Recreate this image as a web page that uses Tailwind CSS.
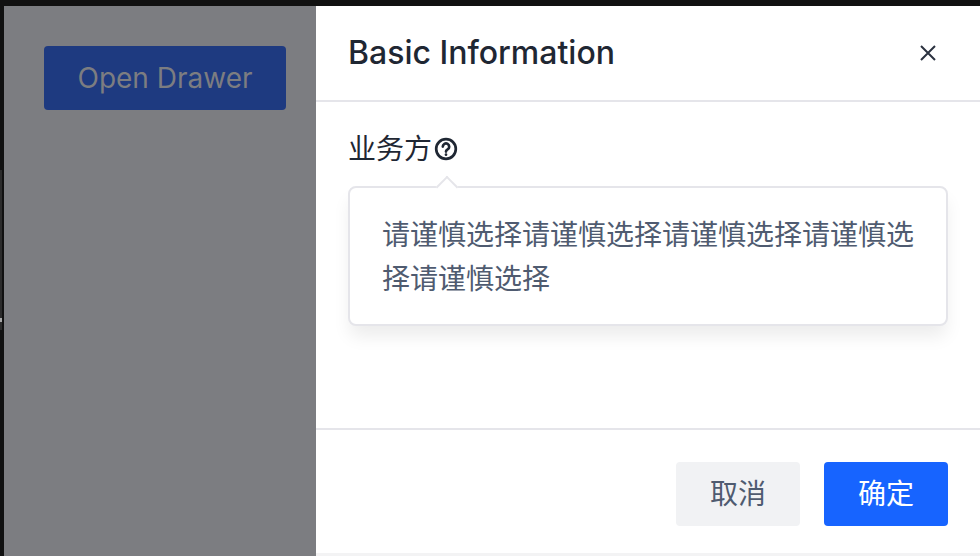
<!DOCTYPE html>
<html lang="en">
	<head>
		<meta charset="UTF-8" />
		<title>Drawer</title>
		<script src="https://cdn.jsdelivr.net/npm/@tailwindcss/browser@4"></script>
	</head>
	<body class="bg-[#111111] overflow-hidden font-['Inter','Noto_Sans_CJK_SC',sans-serif]">
		<div class="h-[556px] w-[980px] pt-[6px] flex">
			<!-- window edge -->
			<div class="w-[4px] h-full pt-[164px] shrink-0">
				<div class="w-[2px] h-[160px] bg-[#2c2c2c] flex flex-col justify-end">
					<div class="h-[4px] mb-[8px] bg-[#a8a8a8]"></div>
				</div>
			</div>
			<!-- page behind the overlay -->
			<div class="w-[312px] h-full bg-[#7c7d81] pt-[40px] pl-[40px]">
				<button class="w-[242px] h-[64px] rounded-[4px] bg-[#1e3a80] text-[#7c7d81] text-[28px] flex items-center justify-center">Open Drawer</button>
			</div>
			<!-- drawer -->
			<div class="w-[664px] h-full bg-white flex flex-col">
				<header class="h-[96px] shrink-0 border-b-2 border-[#e5e5ea] pl-[32px] pr-[40px] flex items-center justify-between">
					<h1 class="text-[32px] font-[450] text-[#1f2733]">Basic Information</h1>
					<svg class="w-[24px] h-[24px]" viewBox="0 0 24 24" fill="none" stroke="#2b3240" stroke-width="2"><path d="M5 5l14 14M19 5L5 19" /></svg>
				</header>
				<main class="flex-1 pt-[27px] pl-[32px] pr-[32px]">
					<div class="flex items-center h-[40px] text-[28px] text-[#1f2733]">
						<span>业务方</span>
						<svg class="w-[24px] h-[24px] ml-[2px]" viewBox="0 0 24 24" fill="none" stroke="#1f2733" stroke-width="2.7" stroke-linecap="round"><circle cx="12" cy="12" r="9.8" /><path d="M8.8 9.6a3.2 3.2 0 1 1 4.8 2.8c-1 .6-1.6 1.1-1.6 2.2" /><path d="M12 17.6v.1" /></svg>
					</div>
					<div class="relative mt-[17px] w-[600px] h-[140px] bg-white border-2 border-[#e5e5ea] rounded-[8px] pt-[25px] pl-[32px] pr-[30px] text-[28px] leading-[44px] text-[#4f5b70] shadow-[0_12px_18px_-2px_rgba(0,0,0,0.08)]">
						<div class="absolute -top-[9px] left-[89px] w-[16px] h-[16px] rotate-45 bg-white border-l-2 border-t-2 border-[#e5e5ea]"></div>
						<p class="relative">请谨慎选择请谨慎选择请谨慎选择请谨慎选择请谨慎选择</p>
					</div>
				</main>
				<footer class="h-[128px] shrink-0 border-t-2 border-b-[3px] border-t-[#e5e5ea] border-b-[#f3f3f4] pt-[32px] pr-[32px] flex justify-end gap-[24px]">
					<button class="w-[124px] h-[64px] rounded-[4px] bg-[#f1f2f4] text-[#4f5b70] text-[28px]">取消</button>
					<button class="w-[124px] h-[64px] rounded-[4px] bg-[#1764ff] text-white text-[28px]">确定</button>
				</footer>
			</div>
		</div>
	</body>
</html>
